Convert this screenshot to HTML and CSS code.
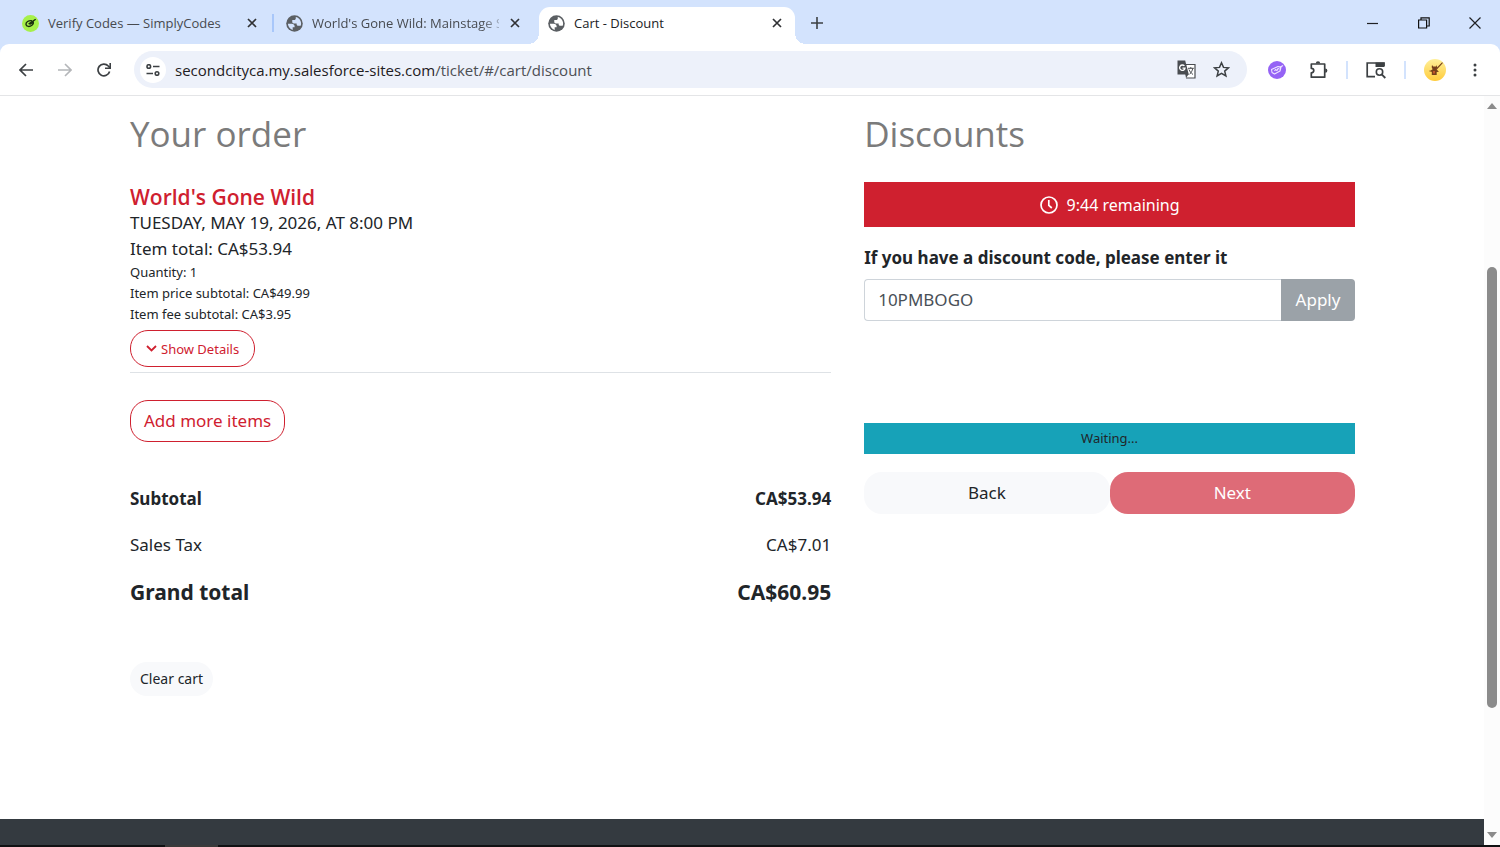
FILE: index.html
```html
<!DOCTYPE html>
<html lang="en">
<head>
  <meta charset="UTF-8">
  <meta name="viewport" content="width=device-width, initial-scale=1.0">
  <title>Cart - Discount</title>
  <link rel="stylesheet" href="styles.css">
</head>
<body>
  <!-- shared icons -->
  <svg class="defs" width="0" height="0" aria-hidden="true">
    <symbol id="globe" viewBox="0 0 16 16">
      <circle cx="8" cy="8" r="7.800" fill="#5b5f63"/>
      <path d="M1.800 8.300h3.700c1.500 0 2.600 1 2.600 2.300v.9H6.300v2.500C3.700 13.300 1.900 11 1.800 8.300z" fill="currentColor"/>
      <path d="M9.200 1.900c2.800.6 5 3.100 5 6.100 0 .8-.1 1.500-.4 2.100h-2.300c-.9 0-1.500-.7-1.500-1.500V8H7.300c-.8 0-1.400-.6-1.400-1.400V4.800h1.900c.8 0 1.400-.6 1.400-1.400z" fill="currentColor"/>
    </symbol>
    <symbol id="close" viewBox="0 0 10 10">
      <path d="M1 1l8 8M9 1L1 9" stroke="currentColor" stroke-width="1.700" fill="none"/>
    </symbol>
  </svg>

  <header class="tabstrip">
    <div class="tab tab-first">
      <svg class="favicon" viewBox="0 0 18 18">
        <circle cx="9" cy="9" r="9" fill="#a6f04a"/>
        <path d="M10.500 6C7 5.500 4 7.500 4.200 10c.3 2.500 4 2.800 6.300.8 1.200-1 1.800-2.300 1.500-3.300L8 10M7 9.500l3-2M10 7.500l4.500-3" stroke="#1c3010" stroke-width="1.500" fill="none" stroke-linejoin="round"/>
      </svg>
      <span class="tab-title">Verify Codes — SimplyCodes</span>
      <button class="tab-close" aria-label="Close tab"><svg width="10" height="10"><use href="#close"/></svg></button>
    </div>
    <span class="tab-divider"></span>
    <div class="tab tab-second">
      <svg class="favicon"><use href="#globe"/></svg>
      <span class="tab-title faded">World's Gone Wild: Mainstage S</span>
      <button class="tab-close" aria-label="Close tab"><svg width="10" height="10"><use href="#close"/></svg></button>
    </div>
    <div class="tab active">
      <svg class="favicon"><use href="#globe"/></svg>
      <span class="tab-title">Cart - Discount</span>
      <button class="tab-close" aria-label="Close tab"><svg width="10" height="10"><use href="#close"/></svg></button>
    </div>
    <button class="new-tab" aria-label="New tab">
      <svg width="12" height="12" viewBox="0 0 12 12"><path d="M6 0v12M0 6h12" stroke="#3c4043" stroke-width="1.600"/></svg>
    </button>
    <div class="window-buttons">
      <button aria-label="Minimize"><svg width="12" height="12" viewBox="0 0 12 12"><path d="M0 6.500h11" stroke="#202124" stroke-width="1.200"/></svg></button>
      <button aria-label="Restore"><svg width="12" height="12" viewBox="0 0 12 12"><path d="M.6 3h8v8h-8zM3 3V.8h8.200V9H9" fill="none" stroke="#111" stroke-width="1.200"/></svg></button>
      <button aria-label="Close"><svg width="12" height="12" viewBox="0 0 12 12"><path d="M.5.5l11 11M11.500.5l-11 11" stroke="#202124" stroke-width="1.200"/></svg></button>
    </div>
  </header>

  <nav class="toolbar">
    <button class="nav-btn" aria-label="Back">
      <svg width="14" height="14" viewBox="0 0 14 14"><path d="M14 7H1.500M7 1 1 7l6 6" fill="none" stroke="#3c4043" stroke-width="1.700"/></svg>
    </button>
    <button class="nav-btn" aria-label="Forward">
      <svg width="14" height="14" viewBox="0 0 14 14"><path d="M0 7h12.500M7 1l6 6-6 6" fill="none" stroke="#b4b6b9" stroke-width="1.600"/></svg>
    </button>
    <button class="nav-btn" aria-label="Reload">
      <svg width="14" height="14" viewBox="0 0 14 14"><path d="M12.600 8.500A5.900 5.900 0 1 1 11.300 3L13 4.800" fill="none" stroke="#3c4043" stroke-width="1.700"/><path d="M13.200 0v5.300H8" fill="none" stroke="#3c4043" stroke-width="1.600"/></svg>
    </button>
    <div class="omnibox">
      <button class="site-info" aria-label="Site information">
        <svg width="14" height="12" viewBox="0 0 14 12"><g fill="none" stroke="#3c4043" stroke-width="1.600"><circle cx="2.800" cy="2.500" r="1.800"/><path d="M7 2.500h6.500M.5 9.500H7"/><circle cx="11" cy="9.500" r="1.800"/></g></svg>
      </button>
      <div class="url">secondcityca.my.salesforce-sites.com<span>/ticket/#/cart/discount</span></div>
      <button class="omni-btn" aria-label="Translate this page">
        <svg width="19" height="19" viewBox="0 0 19 19"><path d="M9 4.500h9v13.500H9" fill="#fff" stroke="#4a4d51" stroke-width="1.200"/><path d="M.5.500h7.700l3.600 14H.500z" fill="#4a4d51"/><path d="M8.200 14h3.600l-2.800 4z" fill="#4a4d51"/><path d="M7.400 5.900A2.700 2.700 0 1 0 8 8.100H5.500" fill="none" stroke="#fff" stroke-width="1.400"/><path d="M11 8.300h5.800M13.800 7v1.300M15.800 8.300c-.5 2.500-1.700 4.500-3.200 6M12 9.500c.8 2 2 3.500 4 5" fill="none" stroke="#4a4d51"/></svg>
      </button>
      <button class="omni-btn" aria-label="Bookmark this tab">
        <svg width="17" height="17" viewBox="0 0 17 17"><path d="M8.500 1.800l2 4.600 5 .4-3.800 3.300 1.200 4.900-4.400-2.600L4.100 15l1.200-4.900L1.500 6.800l5-.4z" fill="none" stroke="#3c4043" stroke-width="1.500"/></svg>
      </button>
    </div>
    <div class="tools">
      <button aria-label="SimplyCodes">
        <svg width="18" height="18" viewBox="0 0 18 18"><circle cx="9" cy="9" r="9" fill="#9563f5"/><path d="M3.500 8.500 10 5.500l3 .5-1 4-5.500 3-2.500-1.500zM6.500 10l1-1.500 1.500 1 1-2 1.500.5M11.500 6.500 15 4.500" fill="none" stroke="#efe6ff" stroke-width="1.100" stroke-linejoin="round"/></svg>
      </button>
      <button class="puzzle" aria-label="Extensions">
        <svg width="18" height="18" viewBox="0 0 18 18"><path d="M1.300 3h13.400v13.200H1.300v-4.400c3.300 0 3.300-4.500 0-4.500z" fill="none" stroke="#3c4043" stroke-width="1.700" stroke-linejoin="round"/><path d="M5.800 2.500a2.200 2.200 0 0 1 4.400 0zM15.200 7.400a2.200 2.200 0 0 1 0 4.400z" fill="#3c4043"/></svg>
      </button>
      <span class="tool-divider"></span>
      <button aria-label="Search this page">
        <svg width="20" height="18" viewBox="0 0 20 18"><path d="M9 15.700H1.200V2H18v3" fill="none" stroke="#3c4043" stroke-width="1.700"/><path d="M9.500 1.500h9V6h-9z" fill="#3c4043"/><circle cx="13.500" cy="11" r="3.200" fill="none" stroke="#3c4043" stroke-width="1.600"/><path d="M15.700 13.300l3.600 3.700" stroke="#3c4043" stroke-width="1.800"/></svg>
      </button>
      <span class="tool-divider"></span>
      <button aria-label="Profile">
        <svg width="22" height="22" viewBox="0 0 22 22"><defs><linearGradient id="sun" x2="0" y2="1"><stop offset="0" stop-color="#fff09a"/><stop offset="1" stop-color="#ffcb3b"/></linearGradient></defs><circle cx="11" cy="11" r="11" fill="url(#sun)"/><path d="M8 6l1.200 1.600h3L12.800 6l.4 2.600-.9 1.700 1.700 1.200-1.300 1v3.500H7.800v-3l-1-1.500 1.800-1.200-.9-2z" fill="#76401b"/><path d="M12 10.500l6.500-6.800M5.500 12l9 .5" stroke="#76401b" stroke-width="1.100"/><path d="M9 12h2v2.500H9z" fill="#c0562a"/></svg>
      </button>
      <button class="menu-btn" aria-label="Menu">
        <svg width="4" height="14" viewBox="0 0 4 14" fill="#3c4043"><circle cx="2" cy="2" r="1.500"/><circle cx="2" cy="7" r="1.500"/><circle cx="2" cy="12" r="1.500"/></svg>
      </button>
    </div>
  </nav>

  <div class="viewport">
    <div class="page">
      <main class="container">
        <section class="order">
          <h1>Your order</h1>
          <div class="item">
            <h2>World's Gone Wild</h2>
            <p>TUESDAY, MAY 19, 2026, AT 8:00 PM</p>
            <p>Item total: CA$53.94</p>
            <p class="small">Quantity: 1</p>
            <p class="small">Item price subtotal: CA$49.99</p>
            <p class="small">Item fee subtotal: CA$3.95</p>
            <button class="btn btn-outline btn-details">
              <svg width="11" height="7" viewBox="0 0 11 7"><path d="M1 1l4.500 4.500L10 1" fill="none" stroke="currentColor" stroke-width="1.800"/></svg>
              Show Details
            </button>
          </div>
          <button class="btn btn-outline">Add more items</button>
          <dl class="totals">
            <div class="total-row strong"><dt>Subtotal</dt><dd>CA$53.94</dd></div>
            <div class="total-row"><dt>Sales Tax</dt><dd>CA$7.01</dd></div>
            <div class="total-row grand"><dt>Grand total</dt><dd>CA$60.95</dd></div>
          </dl>
          <button class="btn btn-light btn-clear">Clear cart</button>
        </section>

        <section class="discounts">
          <h1>Discounts</h1>
          <div class="timer">
            <svg width="18" height="18" viewBox="0 0 18 18"><circle cx="9" cy="9" r="8" fill="none" stroke="#fff" stroke-width="1.700"/><path d="M8.800 4v5.300l3 2.700" fill="none" stroke="#fff" stroke-width="1.700"/></svg>
            9:44 remaining
          </div>
          <label for="code">If you have a discount code, please enter it</label>
          <div class="input-group">
            <input id="code" type="text" value="10PMBOGO">
            <button class="btn-apply">Apply</button>
          </div>
          <div class="waiting">Waiting...</div>
          <div class="actions">
            <button class="btn btn-light">Back</button>
            <button class="btn btn-next">Next</button>
          </div>
        </section>
      </main>
      <footer class="footer"></footer>
    </div>
    <div class="scrollbar">
      <span class="arrow up"></span>
      <span class="thumb"></span>
      <span class="arrow down"></span>
    </div>
  </div>
  <div class="taskbar"><span></span></div>
</body>
</html>
```
FILE: styles.css
```css
* {
  box-sizing: border-box;
}

body {
  margin: 0;
  height: 100vh;
  display: flex;
  flex-direction: column;
  overflow: hidden;
  background: #fff;
  color: #212529;
  font-family: "Noto Sans", "Open Sans", sans-serif;
  font-size: 17px;
  line-height: 26px;
}

h1, h2, p, dl, dd {
  margin: 0;
}

button {
  font: inherit;
  color: inherit;
  background: none;
  border: 0;
  padding: 0;
  cursor: pointer;
}

svg {
  display: block;
  flex: none;
}

.defs {
  position: absolute;
}

/* tab strip */
.tabstrip {
  display: flex;
  align-items: flex-end;
  height: 44px;
  flex: none;
  background: #d3e3fd;
  font-family: "Open Sans", sans-serif;
  font-size: 13px;
  color: #474a4f;
}

.tab {
  display: flex;
  align-items: center;
  height: 37px;
}

.tab-first {
  width: 272px;
  padding: 0 14px 5px 22px;
}

.tab-second {
  width: 265px;
  padding: 0 18px 5px 12px;
}

.tab.active {
  position: relative;
  width: 256px;
  padding: 0 12px 5px 9px;
  background: #fff;
  border-radius: 11px 11px 0 0;
  color: #202124;
}

.tab.active::before,
.tab.active::after {
  content: "";
  position: absolute;
  bottom: 0;
  width: 11px;
  height: 11px;
}

.tab.active::before {
  left: -11px;
  background: radial-gradient(circle at 0 0, #d3e3fd 11px, #fff 11px);
}

.tab.active::after {
  right: -11px;
  background: radial-gradient(circle at 100% 0, #d3e3fd 11px, #fff 11px);
}

.favicon {
  width: 17px;
  height: 17px;
  margin-right: 9px;
  color: #d3e3fd;
}

.active .favicon {
  color: #fff;
}

.tab-title {
  flex: 1;
  min-width: 0;
  white-space: nowrap;
}

.faded {
  -webkit-mask-image: linear-gradient(to right, #000 90%, transparent 105%);
  mask-image: linear-gradient(to right, #000 90%, transparent 105%);
}

.tab-close {
  width: 12px;
  height: 12px;
  margin-left: 10px;
  display: grid;
  place-items: center;
  color: #303134;
}

.tab-divider {
  width: 2px;
  height: 18px;
  margin-bottom: 12px;
  background: #a8c7fa;
}

.new-tab {
  margin: 0 0 15px 16px;
}

.window-buttons {
  display: flex;
  gap: 39px;
  margin-left: auto;
  padding: 0 19px 15px 0;
}

/* toolbar */
.toolbar {
  display: flex;
  align-items: center;
  height: 52px;
  flex: none;
  padding: 0 23px 0 19px;
  border-bottom: 1px solid #e4e5e7;
  border-radius: 9px 9px 0 0;
  background: #fff;
  box-shadow: 0 -9px 0 #d3e3fd;
}

.tabstrip {
  position: relative;
  z-index: 1;
}

.nav-btn {
  margin-right: 25px;
}

.omnibox {
  flex: 1;
  display: flex;
  align-items: center;
  height: 37px;
  padding: 0 17px 0 6px;
  margin-left: -2px;
  border-radius: 19px;
  background: #edf1fa;
}

.site-info {
  display: grid;
  place-items: center;
  width: 26px;
  height: 26px;
  border-radius: 50%;
  background: #fff;
}

.url {
  flex: 1;
  margin-left: 9px;
  font-family: "Open Sans", sans-serif;
  font-size: 15px;
  color: #1f2023;
}

.url span {
  color: #4c4f54;
}

.omni-btn {
  margin-left: 17px;
}

.tools {
  display: flex;
  align-items: center;
  gap: 18px;
  margin-left: 21px;
}

.puzzle {
  margin-left: 6px;
}

.tool-divider {
  width: 2px;
  height: 18px;
  background: #d3e3fd;
}

.menu-btn {
  margin-left: 9px;
}

/* page */
.viewport {
  flex: 1;
  display: flex;
  min-height: 0;
}

.page {
  flex: 1;
  display: flex;
  flex-direction: column;
}

.container {
  flex: 1;
  display: grid;
  grid-template-columns: 10fr 7fr;
  column-gap: 33px;
  width: 100%;
  max-width: 1258px;
  margin: 0 auto;
  padding: 16px 16px 0 17px;
}

h1 {
  margin-bottom: 27px;
  font-family: "Open Sans", sans-serif;
  font-size: 35px;
  font-weight: 400;
  line-height: 43px;
  color: #7b7b7b;
}

.item {
  padding-bottom: 5px;
  margin-bottom: 27px;
  border-bottom: 1px solid #dee2e6;
}

h2 {
  padding-top: 2px;
  font-family: "Open Sans", sans-serif;
  font-size: 21px;
  font-weight: 600;
  line-height: 26px;
  color: #cf202f;
}

.small {
  font-size: 13px;
  line-height: 21px;
}

.btn {
  height: 42px;
  padding: 0 13px;
  border: 1px solid transparent;
  border-radius: 18px;
}

.btn-outline {
  border-color: #cf202f;
  color: #cf202f;
}

.btn-details {
  display: flex;
  align-items: center;
  gap: 4px;
  height: 37px;
  margin-top: 5px;
  padding: 0 15px;
  font-size: 13px;
}

.btn-light {
  background: #f8f9fb;
}

.totals {
  padding: 44px 0 36px;
}

.total-row {
  display: flex;
  justify-content: space-between;
  margin-bottom: 20px;
}

.strong,
.grand {
  font-weight: 700;
}

.grand {
  font-size: 21px;
  line-height: 28px;
}

.btn-clear {
  height: 34px;
  padding: 0 9px;
  font-size: 14px;
}

.timer {
  display: flex;
  align-items: center;
  justify-content: center;
  gap: 9px;
  height: 45px;
  margin-bottom: 18px;
  background: #cf202f;
  color: #fff;
  font-size: 16px;
}

label {
  display: block;
  margin-bottom: 8px;
  font-weight: 700;
}

.input-group {
  display: flex;
  height: 42px;
  margin-bottom: 102px;
}

.input-group input {
  flex: 1;
  min-width: 0;
  padding: 0 13px;
  border: 1px solid #ced4da;
  border-right: 0;
  border-radius: 4px 0 0 4px;
  font: inherit;
  color: #495057;
}

.btn-apply {
  width: 74px;
  border-radius: 0 4px 4px 0;
  background: #9ba2a8;
  color: #fff;
}

.waiting {
  height: 31px;
  margin-bottom: 18px;
  background: #17a2b8;
  font-size: 13px;
  line-height: 31px;
  text-align: center;
}

.actions {
  display: flex;
}

.actions .btn {
  flex: 1;
}

.btn-next {
  background: #de6b77;
  color: #fff;
}

.footer {
  height: 26px;
  background: #343a40;
}

.scrollbar {
  display: flex;
  flex-direction: column;
  align-items: center;
  width: 16px;
  padding: 7px 0;
  background: #fcfcfc;
}

.arrow {
  border: 5px solid transparent;
}

.up {
  border-top: 0;
  border-bottom: 6px solid #8b8b8b;
}

.down {
  margin-top: auto;
  border-bottom: 0;
  border-top: 6px solid #8b8b8b;
}

.thumb {
  width: 10px;
  height: 60%;
  margin-top: 158px;
  border-radius: 5px;
  background: #8b8b8b;
}

.taskbar {
  flex: none;
  height: 2px;
  background: #101113;
}

.taskbar span {
  display: block;
  width: 53px;
  height: 2px;
  margin-left: 165px;
  background: #3a3a3a;
}
```
